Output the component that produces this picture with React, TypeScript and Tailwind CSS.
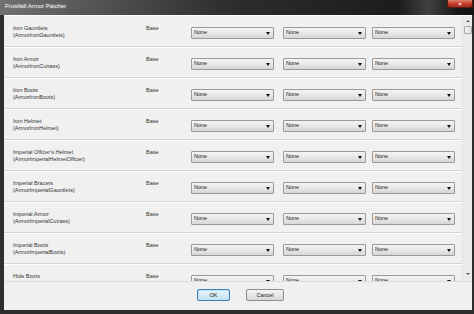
import React from "react";

const armors = [
  { name: "Iron Gauntlets", id: "(ArmorIronGauntlets)" },
  { name: "Iron Armor", id: "(ArmorIronCuirass)" },
  { name: "Iron Boots", id: "(ArmorIronBoots)" },
  { name: "Iron Helmet", id: "(ArmorIronHelmet)" },
  { name: "Imperial Officer's Helmet", id: "(ArmorImperialHelmetOfficer)" },
  { name: "Imperial Bracers", id: "(ArmorImperialGauntlets)" },
  { name: "Imperial Armor", id: "(ArmorImperialCuirass)" },
  { name: "Imperial Boots", id: "(ArmorImperialBoots)" },
  { name: "Hide Boots", id: "" },
];

function Combo() {
  return (
    <div className="flex h-[12px] w-[83px] items-center justify-between rounded-[1px] border border-[#9a9a9a] bg-gradient-to-b from-[#f4f4f4] via-[#e8e8e8] to-[#d6d6d6] pl-[2px] pr-[3px]">
      <span className="leading-none text-[#1a1a1a]">None</span>
      <span className="h-0 w-0 border-x-[2px] border-t-[3px] border-x-transparent border-t-[#111]" />
    </div>
  );
}

function Row({ name, id }: { name: string; id: string }) {
  return (
    <div className="flex h-[31px] shrink-0 border-b border-b-[#d4d4d4] pt-[9px] shadow-[0_1px_0_#ffffff]">
      <div className="w-[142px] pl-[9px] leading-[6.5px] text-[#333]">
        <div>{name}</div>
        <div>{id}</div>
      </div>
      <div className="w-[45px] leading-[6.5px] text-[#333]">Base</div>
      <div className="flex pt-[2px]">
        <Combo />
        <div className="w-[9px]" />
        <Combo />
        <div className="w-[6px]" />
        <Combo />
      </div>
    </div>
  );
}

export default function App() {
  return (
    <div
      className="flex h-[314px] w-[474px] flex-col overflow-hidden bg-[#2e2e2e] text-[5.5px]"
      style={{ fontFamily: '"Liberation Sans", Arial, sans-serif' }}
    >
      <div className="relative h-[15px] shrink-0 bg-gradient-to-r from-[#707070] via-[#2c2c2c] to-[#151515]">
        <span className="absolute left-[5px] top-[2px] text-[6px] text-[#f0f0f0] [text-shadow:0_0_3px_#aaa]">
          Frostfall Armor Patcher
        </span>
        <div className="absolute right-[16px] top-0 h-[15px] w-[60px] bg-gradient-to-r from-transparent via-[#5a5a5a]/60 to-transparent" />
        <div className="absolute right-[1px] top-0 flex h-[8px] w-[26px] items-center justify-center rounded-b-[3px] border border-t-0 border-[#5a1a10] bg-gradient-to-b from-[#e08070] via-[#c8402a] to-[#a02818] text-[6px] font-bold leading-none text-white">
          ×
        </div>
      </div>
      <div className="mb-[4px] ml-[4px] mr-[2px] flex flex-1 flex-col border-t border-t-[#ffffff] bg-[#f0f0f0]">
        <div className="flex h-[265px] shrink-0">
          <div className="flex flex-1 flex-col overflow-hidden">
            {armors.map((a) => (
              <Row key={a.name} name={a.name} id={a.id} />
            ))}
          </div>
          <div className="flex w-[10px] flex-col items-center border-l border-l-[#e2e2e2] bg-[#ebebeb]">
            <div className="mt-[4px] h-0 w-0 border-x-[2px] border-b-[2px] border-x-transparent border-b-[#555]" />
            <div className="mt-[4px] h-[8px] w-[8px] rounded-[1px] border border-[#a8a8a8] bg-gradient-to-r from-[#f6f6f6] to-[#dedede]" />
            <div className="flex-1" />
            <div className="mb-[6px] h-0 w-0 border-x-[2px] border-t-[2px] border-x-transparent border-t-[#555]" />
          </div>
        </div>
        <div className="flex flex-1 items-center justify-center gap-[16px] border-t border-t-[#dcdcdc] pb-[2px] pl-[5px]">
          <div className="flex h-[12px] w-[33px] items-center justify-center rounded-[2px] border border-[#3c7fb1] bg-gradient-to-b from-[#eaf6fd] to-[#c4e0f0] text-[#222] shadow-[inset_0_0_0_1px_#bfe4f9]">
            OK
          </div>
          <div className="flex h-[12px] w-[38px] items-center justify-center rounded-[2px] border border-[#8e8e8e] bg-gradient-to-b from-[#f4f4f4] to-[#d8d8d8] text-[#222]">
            Cancel
          </div>
        </div>
      </div>
    </div>
  );
}
